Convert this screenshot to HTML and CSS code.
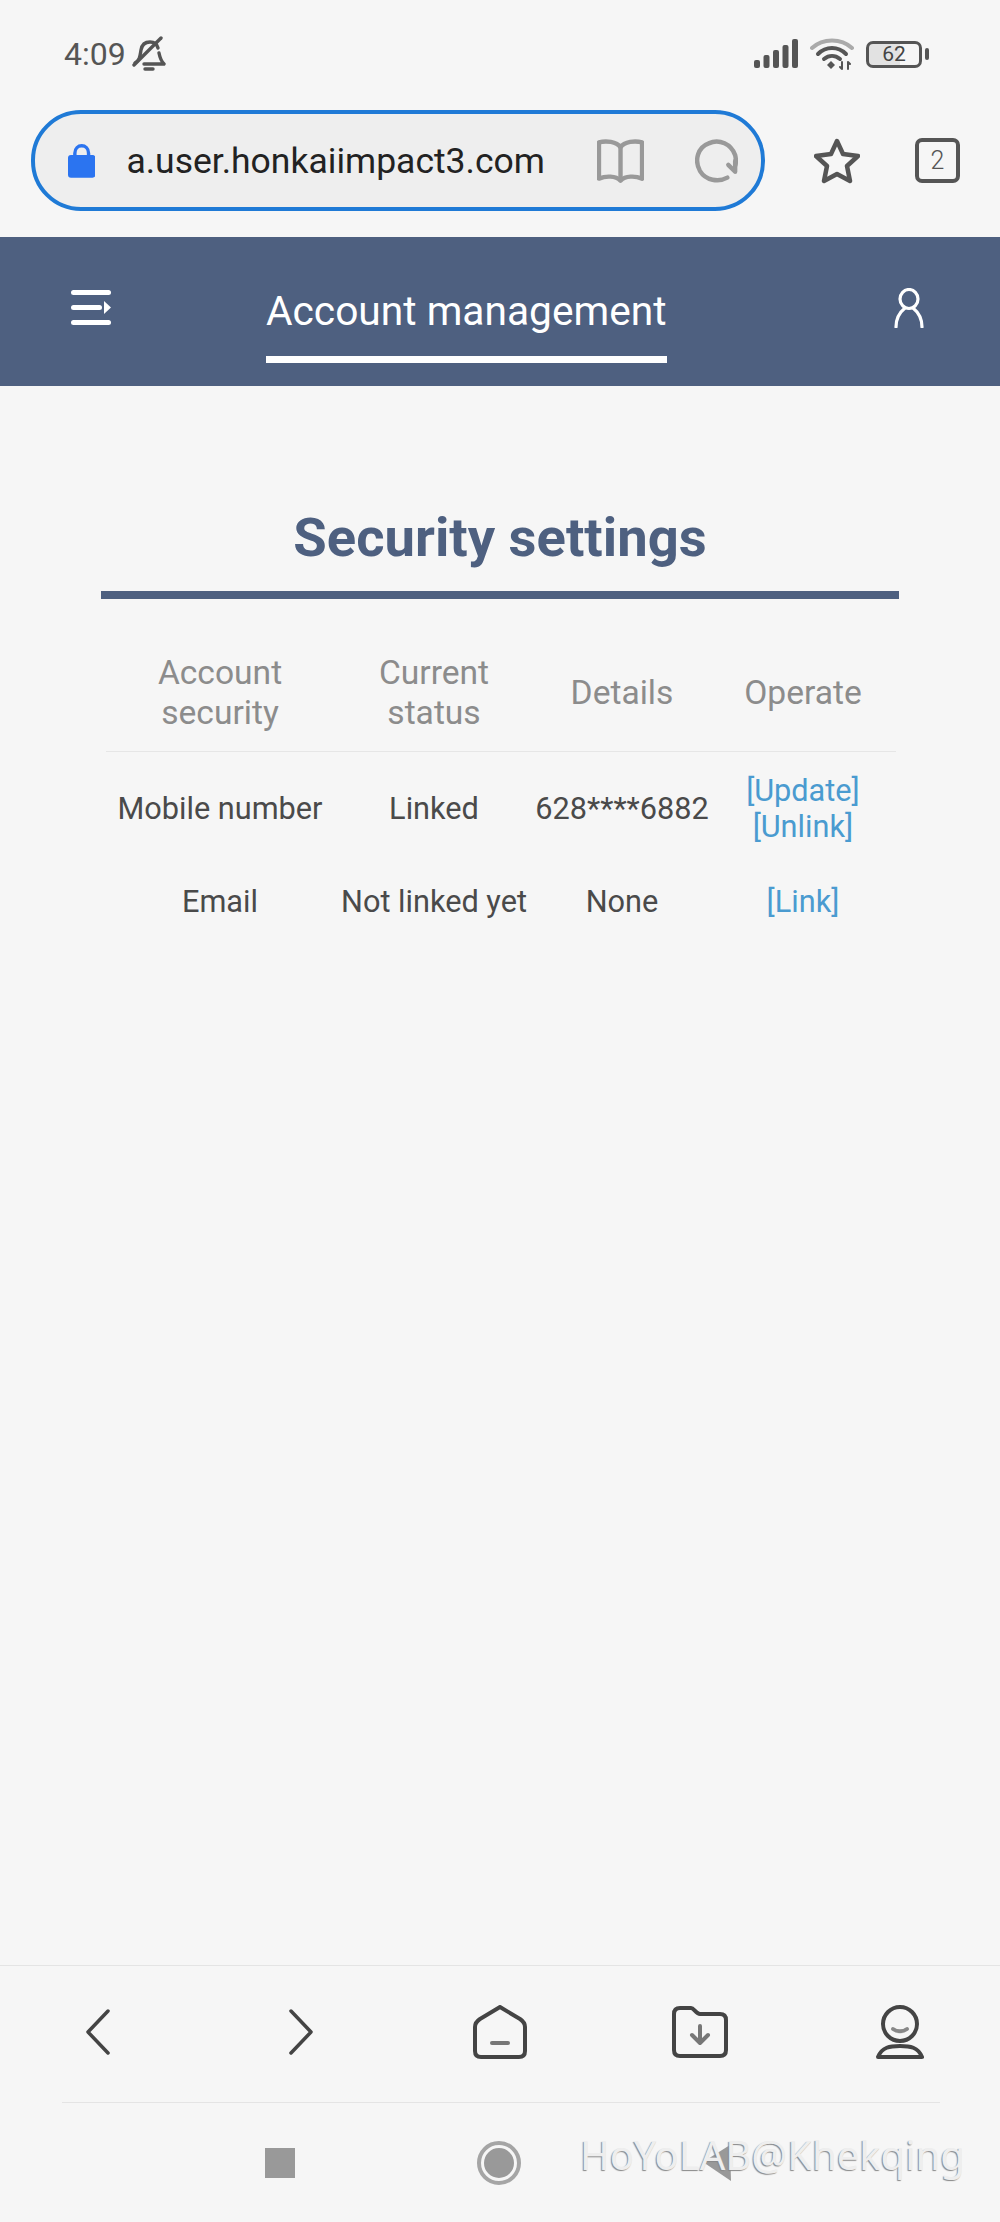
FILE: index.html
```html
<!DOCTYPE html>
<html lang="en">
<head>
  <meta charset="UTF-8" />
  <meta name="viewport" content="width=device-width, initial-scale=1.0"/>
  <title>Account management</title>
  <link rel="stylesheet" href="styles.css">
</head>
<body>
  <div class="status-bar">
    <div class="status-left">
      <span class="time">4:09</span>
      <svg class="bell" width="34" height="36" viewBox="0 0 34 36" fill="none" stroke="#555" stroke-width="3.400" stroke-linecap="round" stroke-linejoin="round">
        <path d="M3 27 C8 24 8 20 9 14 C10 8 14 6 18 6 C22 6 25 8 26 12"/>
        <path d="M27 17 C28 22 29 25 32 28 L12 28"/>
        <path d="M2 29 L29 2"/>
        <path d="M13 33 H21"/>
      </svg>
    </div>
    <div class="status-right">
      <svg width="44" height="30" viewBox="0 0 44 30" fill="#555">
        <rect x="0" y="21" width="6" height="8" rx="2"/>
        <rect x="9.500" y="16" width="6" height="13" rx="2"/>
        <rect x="19" y="11" width="6" height="18" rx="2"/>
        <rect x="28.500" y="6" width="6" height="23" rx="2"/>
        <rect x="38" y="0" width="6" height="29" rx="2"/>
      </svg>
      <svg class="wifi" width="44" height="32" viewBox="0 0 44 32" fill="none" stroke-linecap="round">
        <path d="M2 10 C13 0 31 0 42 10" stroke="#aaa" stroke-width="4"/>
        <path d="M8 16 C16 8 28 8 36 16" stroke="#555" stroke-width="4"/>
        <path d="M14 21 C19 17 25 17 30 21" stroke="#555" stroke-width="4"/>
        <path d="M17 27 L21 23 L25 27 L21 31 Z" fill="#555" stroke="none"/>
        <path d="M32 24 V31 M30 29 L32 31 M38 24 V31 M38 24 L40 26" stroke="#555" stroke-width="2"/>
      </svg>
      <div class="battery">62</div>
    </div>
  </div>

  <div class="browser-bar">
    <div class="url-box">
      <svg width="28" height="34" viewBox="0 0 28 34">
        <path d="M7 14 V9 C7 -1 21 -1 21 9 V14" fill="none" stroke="#2b74f0" stroke-width="3.500"/>
        <rect x="0" y="11" width="28" height="23" rx="3" fill="#2b74f0"/>
      </svg>
      <span class="url-text">a.user.honkaiimpact3.com</span>
      <svg width="48" height="44" viewBox="0 0 48 44" fill="none" stroke="#999" stroke-width="4.500" stroke-linejoin="round">
        <path d="M24 8 C20 2 9 1 2 3 V40 C9 37 19 37 24 42 C29 37 39 37 46 40 V3 C39 1 28 2 24 8 Z"/>
        <path d="M24 8 V42"/>
      </svg>
      <svg width="44" height="44" viewBox="0 0 44 44" fill="none" stroke="#999" stroke-width="4.500" stroke-linecap="round" stroke-linejoin="round">
        <path d="M33 39 C24 44 11 42 5 32 C-1 21 3 8 14 4 C25 -1 37 5 41 16 C42 20 42 24 41 27"/>
        <path d="M41 22 L41 33 L34 26"/>
      </svg>
    </div>
    <svg class="star" width="46" height="46" viewBox="0 0 46 46" fill="none" stroke="#555" stroke-width="4.500" stroke-linejoin="round">
      <path d="M23 3 L29 16 L44 18 L33 28 L36 43 L23 36 L10 43 L13 28 L2 18 L17 16 Z"/>
    </svg>
    <div class="tab-count">2</div>
  </div>

  <header class="site-header">
    <svg class="menu-icon" width="41" height="36" viewBox="0 0 41 36" fill="#fff">
      <rect x="0" y="0" width="40" height="5" rx="2.500"/>
      <rect x="0" y="15" width="31" height="5" rx="2.500"/>
      <path d="M33 11 L40 17.500 L33 24 Z"/>
      <rect x="0" y="30" width="40" height="5" rx="2.500"/>
    </svg>
    <div class="header-title">Account management</div>
    <svg class="user-icon" width="30" height="40" viewBox="0 0 30 40" fill="none" stroke="#fff" stroke-width="3.200" stroke-linecap="round">
      <ellipse cx="15" cy="11" rx="9" ry="9.500"/>
      <path d="M2 39 C2 30 6 24 11 20 M28 39 C28 30 24 24 19 20"/>
    </svg>
  </header>

  <main class="content">
    <h1 class="section-title">Security settings</h1>
    <table class="security-table">
      <colgroup>
        <col class="col-name">
        <col class="col-status">
        <col class="col-details">
        <col class="col-operate">
      </colgroup>
      <thead>
        <tr>
          <th>Account<br>security</th>
          <th>Current<br>status</th>
          <th>Details</th>
          <th>Operate</th>
        </tr>
      </thead>
      <tbody>
        <tr class="row-linked">
          <td>Mobile number</td>
          <td>Linked</td>
          <td>628****6882</td>
          <td><a href="#">[Update]</a><a href="#">[Unlink]</a></td>
        </tr>
        <tr>
          <td>Email</td>
          <td>Not linked yet</td>
          <td>None</td>
          <td><a href="#">[Link]</a></td>
        </tr>
      </tbody>
    </table>
  </main>

  <nav class="browser-nav">
    <svg width="26" height="46" viewBox="0 0 26 46" fill="none" stroke="#444" stroke-width="3.500" stroke-linecap="round" stroke-linejoin="round" class="nav-back">
      <path d="M23 2 L3 23 L23 44"/>
    </svg>
    <svg width="26" height="46" viewBox="0 0 26 46" fill="none" stroke="#444" stroke-width="3.500" stroke-linecap="round" stroke-linejoin="round" class="nav-forward">
      <path d="M3 2 L23 23 L3 44"/>
    </svg>
    <svg width="54" height="54" viewBox="0 0 54 54" fill="none" stroke="#444" stroke-width="4" stroke-linecap="round" stroke-linejoin="round">
      <path d="M27 2 L47 14 C50 16 52 18 52 22 V46 C52 50 50 52 46 52 H8 C4 52 2 50 2 46 V22 C2 18 4 16 7 14 Z"/>
      <path d="M19 38 H35" stroke="#777"/>
    </svg>
    <svg width="56" height="52" viewBox="0 0 56 52" fill="none" stroke="#444" stroke-width="4" stroke-linecap="round" stroke-linejoin="round">
      <path d="M2 8 C2 4 4 2 8 2 H19 C22 2 24 8 28 8 H48 C52 8 54 10 54 14 V44 C54 48 52 50 48 50 H8 C4 50 2 48 2 44 Z"/>
      <path d="M28 20 V36 M20 29 L28 37 L36 29" stroke="#777"/>
    </svg>
    <svg width="48" height="54" viewBox="0 0 48 54" fill="none" stroke="#444" stroke-width="4" stroke-linecap="round" stroke-linejoin="round">
      <circle cx="24" cy="19" r="17"/>
      <path d="M17 24 C21 27 27 27 31 24" stroke="#888"/>
      <path d="M2 52 C6 42 14 41 24 41 C34 41 42 42 46 52 Z"/>
    </svg>
  </nav>

  <div class="system-nav">
    <div class="key-square"></div>
    <div class="key-circle"></div>
    <svg width="30" height="36" viewBox="0 0 30 36" fill="#999">
      <path d="M0 17 L27 0 L28 36 Z"/>
    </svg>
  </div>

  <div class="watermark">HoYoLAB@Khekqing</div>
</body>
</html>
```

FILE: styles.css
```css
body {
  font-family: Roboto, sans-serif;
  margin: 0;
  padding: 0;
  width: 1000px;
  height: 2222px;
  background: #f6f6f6;
  color: #4a4a4a;
  display: flex;
  flex-direction: column;
  position: relative;
  overflow: hidden;
}

.status-bar {
  height: 108px;
  padding: 0 72px 0 64px;
  display: flex;
  align-items: center;
  justify-content: space-between;
  box-sizing: border-box;
  flex-shrink: 0;
}

.status-left,
.status-right {
  display: flex;
  align-items: center;
}

.status-right {
  gap: 12px;
}

.time {
  font-size: 32px;
  color: #555;
}

.bell {
  margin-left: 6px;
}

.battery {
  position: relative;
  width: 56px;
  height: 27px;
  box-sizing: border-box;
  border: 3px solid #555;
  border-radius: 7px;
  background: linear-gradient(to right, #e2e2e2 62%, transparent 62%);
  font-size: 21px;
  line-height: 21px;
  text-align: center;
  color: #444;
  margin-right: 6px;
}

.battery::after {
  content: "";
  position: absolute;
  right: -10px;
  top: 4px;
  width: 4px;
  height: 12px;
  border-radius: 2px;
  background: #555;
}

.browser-bar {
  height: 129px;
  padding: 2px 0 0 31px;
  display: flex;
  align-items: flex-start;
  box-sizing: border-box;
  flex-shrink: 0;
}

.url-box {
  width: 734px;
  height: 101px;
  box-sizing: border-box;
  padding: 0 23px 0 33px;
  display: flex;
  align-items: center;
  background: #eee;
  border: 4px solid #1f7ad6;
  border-radius: 50px;
}

.url-text {
  width: 424px;
  margin: 0 52px 0 31px;
  font-size: 35.500px;
  line-height: 48px;
  color: #222;
  white-space: nowrap;
}

.url-box svg:last-child {
  margin-left: 51px;
}

.star {
  margin: 28px 0 0 49px;
}

.tab-count {
  width: 45px;
  height: 45px;
  box-sizing: border-box;
  margin: 28px 0 0 55px;
  border: 4px solid #555;
  border-radius: 7px;
  font-size: 25px;
  font-weight: 300;
  line-height: 37px;
  text-align: center;
  color: #555;
}

.site-header {
  height: 149px;
  padding-right: 76px;
  display: flex;
  align-items: flex-start;
  background: #4e6080;
  box-sizing: border-box;
  flex-shrink: 0;
}

.menu-icon {
  margin: 53px 0 0 71px;
}

.header-title {
  margin: 47px 0 0 154px;
  padding-bottom: 18px;
  border-bottom: 7px solid #fff;
  font-size: 40.700px;
  line-height: 54px;
  color: #fff;
  white-space: nowrap;
}

.user-icon {
  margin: 51px 0 0 auto;
}

.content {
  flex: 1;
  padding-top: 122px;
}

.section-title {
  margin: 0 101px;
  padding-bottom: 23px;
  border-bottom: 8px solid #4e6080;
  font-size: 54.400px;
  line-height: 60px;
  font-weight: 700;
  text-align: center;
  color: #4e6080;
}

.security-table {
  width: 790px;
  margin: 36px 0 0 106px;
  border-collapse: collapse;
  table-layout: fixed;
  text-align: center;
  font-size: 30.700px;
}

.col-name { width: 228px; }
.col-status { width: 200px; }
.col-details { width: 176px; }
.col-operate { width: 186px; }

.security-table th {
  padding: 18px 0;
  font-size: 33.600px;
  font-weight: 400;
  line-height: 40px;
  color: #8c8c8c;
  border-bottom: 1px solid #e6e6e6;
}

.security-table td {
  padding: 18px 0;
  line-height: 36px;
  white-space: nowrap;
}

.security-table .row-linked td {
  padding: 21px 0;
}

.security-table a {
  display: block;
  color: #4a9bd0;
  text-decoration: none;
}

.browser-nav {
  height: 137px;
  padding-bottom: 5px;
  display: grid;
  grid-template-columns: repeat(5, 200px);
  justify-items: center;
  align-items: center;
  border-top: 1px solid #e4e4e4;
  box-sizing: border-box;
  flex-shrink: 0;
}

.nav-back {
  margin-right: 4px;
}

.nav-forward {
  margin-left: 2px;
}

.system-nav {
  height: 120px;
  margin: 0 60px 0 62px;
  padding-left: 203px;
  display: flex;
  align-items: center;
  gap: 186px;
  border-top: 1px solid #e4e4e4;
  box-sizing: border-box;
  flex-shrink: 0;
}

.key-square {
  width: 30px;
  height: 30px;
  background: #999;
}

.key-circle {
  width: 30px;
  height: 30px;
  border: 3px solid #f6f6f6;
  outline: 4px solid #a5a5a5;
  background: #999;
  border-radius: 50%;
}

.watermark {
  position: absolute;
  left: 580px;
  top: 2125px;
  font-family: "Noto Sans", sans-serif;
  font-size: 40px;
  line-height: 60px;
  color: #eee;
  text-shadow: -1px 1px 1px #888;
  white-space: nowrap;
}
```
